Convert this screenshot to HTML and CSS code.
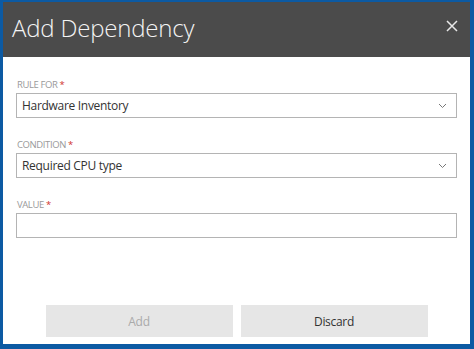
FILE: index.html
```html
<!DOCTYPE html>
<html>
<head>
<meta charset="utf-8">
<link rel="stylesheet" href="styles.css">
</head>
<body>
<div class="dialog">
  <div class="header">
    <h1 class="title">Add Dependency</h1>
    <button class="close" aria-label="Close">
      <svg width="12" height="12" viewBox="0 0 12 12"><path d="M1 1L11 11M11 1L1 11" stroke="#e8e8e8" stroke-width="1.5" fill="none"/></svg>
    </button>
  </div>
  <div class="body">
    <div class="field">
      <div class="label">RULE FOR <span class="req">*</span></div>
      <div class="select">
        <span class="value">Hardware Inventory</span>
        <svg class="chev" width="9" height="6" viewBox="0 0 9 6"><path d="M1 1L4.5 4.5L8 1" stroke="#777" stroke-width="1" fill="none"/></svg>
      </div>
    </div>
    <div class="field">
      <div class="label">CONDITION <span class="req">*</span></div>
      <div class="select">
        <span class="value">Required CPU type</span>
        <svg class="chev" width="9" height="6" viewBox="0 0 9 6"><path d="M1 1L4.5 4.5L8 1" stroke="#777" stroke-width="1" fill="none"/></svg>
      </div>
    </div>
    <div class="field">
      <div class="label">VALUE <span class="req">*</span></div>
      <div class="input"></div>
    </div>
    <div class="actions">
      <button class="btn disabled">Add</button>
      <button class="btn">Discard</button>
    </div>
  </div>
</div>
</body>
</html>
```

FILE: styles.css
```css
* { box-sizing: border-box; }
html, body { margin: 0; padding: 0; background: #fff; }
body { font-family: "Open Sans", "Noto Sans", sans-serif; }
.dialog {
  width: 474px;
  height: 349px;
  border-style: solid;
  border-color: #0c5aa3;
  border-width: 2px 4px 5px 3px;
  display: flex;
  flex-direction: column;
  background: #fff;
}
.header {
  height: 55px;
  background: #4b4b4b;
  display: flex;
  align-items: center;
  justify-content: space-between;
  padding: 0 12px 0 9px;
  flex: none;
}
.title {
  margin: 0;
  font-weight: 300;
  font-size: 24px;
  color: #f4f4f4;
  letter-spacing: -0.2px;
  line-height: 1;
  padding-bottom: 4px;
}
.close {
  background: none;
  border: 0;
  padding: 0;
  width: 12px;
  height: 12px;
  display: flex;
  margin-bottom: 8px;
}
.body {
  flex: 1;
  display: flex;
  flex-direction: column;
  padding: 21px 13px 7px 13px;
}
.field { display: flex; flex-direction: column; margin-bottom: 20px; }
.label {
  font-size: 9.5px;
  line-height: 14px;
  color: #9a9a9a;
  padding-left: 1px;
  margin-bottom: 1px;
  letter-spacing: -0.4px;
}
.req { color: #d0312d; }
.select, .input {
  height: 25px;
  border: 1px solid #b4b4b4;
  display: flex;
  align-items: center;
  padding: 0 9px 0 5px;
}
.select { justify-content: space-between; }
.value { font-size: 12px; color: #333; letter-spacing: -0.3px; }
.chev { margin-top: 1px; }
.actions {
  margin-top: auto;
  display: flex;
  justify-content: center;
  gap: 8px;
}
.btn {
  width: 187px;
  height: 32px;
  border: 0;
  background: #e6e6e6;
  font-family: "Open Sans", "Noto Sans", sans-serif;
  font-size: 12px;
  letter-spacing: -0.3px;
  color: #333;
  padding: 0;
}
.btn.disabled { color: #aaa; }
```
